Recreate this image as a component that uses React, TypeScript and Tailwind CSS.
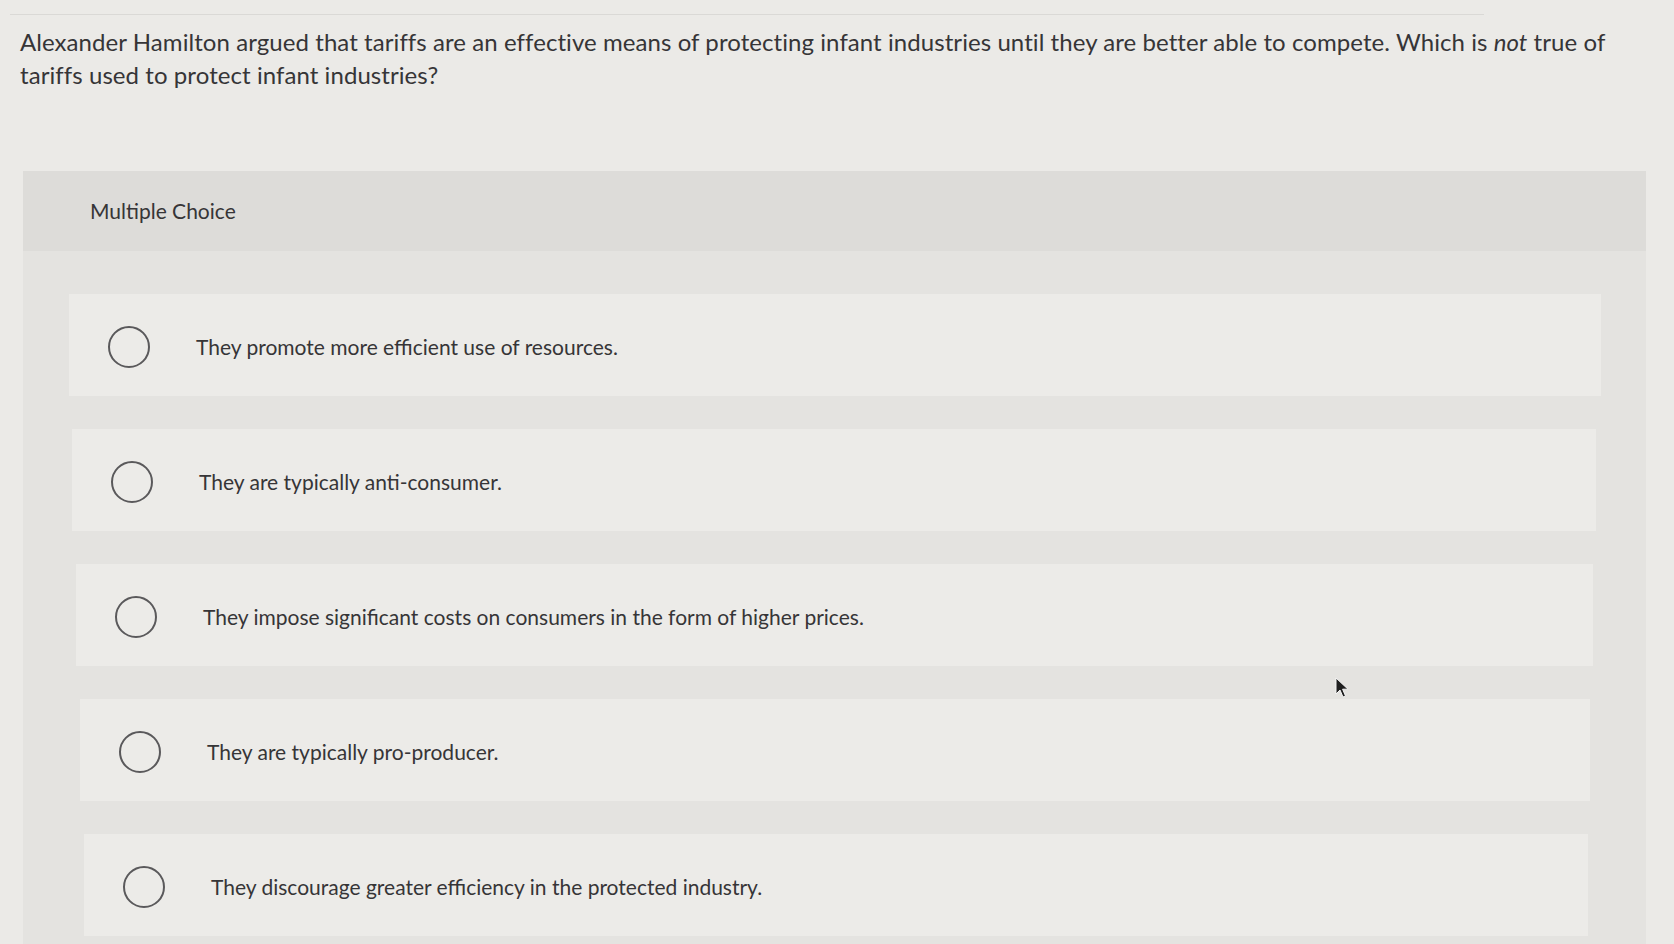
const options = [
  { text: "They promote more efficient use of resources.", row: "ml-[46px] mr-[45px]" },
  { text: "They are typically anti-consumer.", row: "ml-[49px] mr-[50px]" },
  { text: "They impose significant costs on consumers in the form of higher prices.", row: "ml-[53px] mr-[53px]" },
  { text: "They are typically pro-producer.", row: "ml-[57px] mr-[56px]" },
  { text: "They discourage greater efficiency in the protected industry.", row: "ml-[61px] mr-[58px]" },
]

function Cursor() {
  return (
    <svg className="absolute left-[1335px] top-[677px]" width="14" height="22" viewBox="0 0 14 22">
      <path d="M1 1 L1 17 L5 13 L8 20 L10.5 19 L7.6 12.2 L13 12.2 Z" fill="#1f1f1f" stroke="#f4f4f4" strokeWidth="1" />
    </svg>
  )
}

export default function App() {
  return (
    <div className="relative h-[944px] w-[1674px] overflow-hidden bg-[#ebeae7] font-['Lato',sans-serif] text-[#363537]">
      <div className="ml-[10px] pt-[14px]">
        <div className="h-px w-[1474px] bg-[#dad9d6]" />
      </div>

      <p className="ml-[20px] mt-[10px] text-[24px] leading-[33px] tracking-[0.07px]">
        Alexander Hamilton argued that tariffs are an effective means of protecting infant industries until they are better able to compete. Which is <em>not</em> true of
        <br />
        tariffs used to protect infant industries?
      </p>

      <div className="ml-[23px] mt-[80px] w-[1623px] bg-[#e4e3e0] pb-[40px]">
        <div className="flex h-[80px] items-center bg-[#dddcd9] pl-[67px] text-[21px]">Multiple Choice</div>

        <div className="mt-[43px] flex flex-col gap-[33px]">
          {options.map((o) => (
            <div key={o.text} className={`${o.row} flex h-[102px] items-center bg-[#ecebe8] pt-[4px]`}>
              <div className="ml-[39px] h-[42px] w-[42px] shrink-0 rounded-full border-2 border-[#5a595b]" />
              <span className="ml-[46px] text-[21px]">{o.text}</span>
            </div>
          ))}
        </div>
      </div>

      <Cursor />
    </div>
  )
}
